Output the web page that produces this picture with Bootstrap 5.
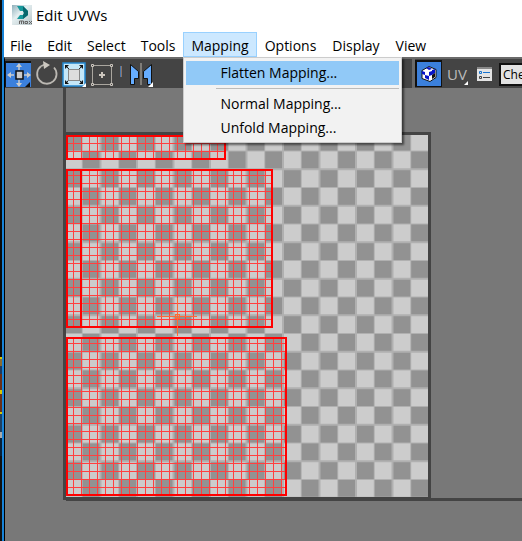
<!DOCTYPE html>
<html lang="en">
<head>
<meta charset="utf-8">
<meta name="viewport" content="width=device-width, initial-scale=1">
<title>Edit UVWs</title>
<link rel="stylesheet" href="https://cdn.jsdelivr.net/npm/bootstrap@5.3.0/dist/css/bootstrap.min.css">
<style>
body{font-family:"Open Sans","Noto Sans",sans-serif;font-size:14px;line-height:20px;color:#000;background:#787878}
.desktop-edge{width:2px;background:linear-gradient(#0b0b0b 0 357px,#d8c800 357px 359px,#8b6a30 359px 366px,#203a5c 366px 374px,#6a3018 374px 390px,#d8c800 390px 394px,#6a3018 394px 412px,#d8c800 412px 414px,#204060 414px 432px,#aaa 432px 438px,#082038 438px 456px,#111 456px)}
.window{border-left:2px solid #1883d7;min-width:0}
.title{height:32px;padding:0 0 3px 8px;gap:4px;font-size:15px}
.menus{height:25px}
.menu-btn{border:1px solid transparent;background:none;padding:2px 7px 0;height:25px;color:#000;line-height:20px}
.menus>.menu-btn:nth-child(-n+3){padding-right:6px}
.menus>.menu-btn:first-child{padding-left:5px}
.menu-btn.show{background:#cce8ff;border-color:#99d1ff}
.drop{position:absolute;top:100%;left:0;width:219px;background:#f2f2f2;border:1px solid #ccc;padding:3px 2px 2px;box-shadow:2px 2px 2px #0008;z-index:5}
.drop button{display:block;width:100%;border:0;background:none;text-align:left;padding:2px 0 2px 34px;height:24px;white-space:nowrap}
.drop button.hot{background:#91c9f7}
.drop hr{margin:3px 0 3px 30px;color:#bbb;opacity:1}
.tools{height:31px;background:#444;border-top:2px solid #6a6a6a;border-left:1px solid #000}
.tool{border:0;padding:0;background:none;width:28px;height:28px}
.tool svg{display:block}
.divider{width:3px;height:29px;background:#6a6a6a}
.checker-select{appearance:none;border:2px solid #111;border-right:0;border-radius:0;background:#e3e3e3;color:#000;width:23px;height:23px;font-size:12px;line-height:16px;padding:0 0 0 2px}
.view{border-left:1px solid #000;background:#787878;min-height:0}
</style>
<script src="https://cdn.jsdelivr.net/npm/bootstrap@5.3.0/dist/js/bootstrap.bundle.min.js"></script>
</head>
<body>
<div class="d-flex vh-100 overflow-hidden">
 <div class="desktop-edge flex-shrink-0"></div>
 <main class="window d-flex flex-column flex-fill">
  <header class="title bg-white d-flex align-items-center flex-shrink-0">
   <svg width="20" height="20" viewBox="0 0 20 20" aria-hidden="true"><defs><linearGradient id="lg" x2="1" y2="1"><stop stop-color="#8fb0bb"/><stop offset=".4" stop-color="#e4eef0"/><stop offset="1" stop-color="#b7c4c8"/></linearGradient></defs><path fill="url(#lg)" d="M0 0h20v20H0z"/><path fill="#17989c" d="M5 1h6l5 5v4l-5 4H5l3-4h3l1-2-1-2H8z"/><path fill="#07666d" d="M11 1l5 5v4l-5 4v-4l1-2-1-2z"/><path stroke="#666" fill="none" d="M7.500 19v-3h4v3M9.500 16v3M13 16.500h2.500v2H13zM17 16l3 3M20 16l-3 3"/></svg>
   <span>Edit UVWs</span>
  </header>
  <nav class="menus bg-white d-flex flex-shrink-0" aria-label="Main menu">
   <button class="menu-btn">File</button><button class="menu-btn">Edit</button><button class="menu-btn">Select</button><button class="menu-btn">Tools</button>
   <div class="position-relative"><button class="menu-btn show" aria-expanded="true">Mapping</button>
    <div class="drop"><button class="hot">Flatten Mapping...</button><hr><button>Normal Mapping...</button><button>Unfold Mapping...</button></div>
   </div>
   <button class="menu-btn">Options</button><button class="menu-btn">Display</button><button class="menu-btn">View</button>
  </nav>
  <div class="tools d-flex justify-content-between flex-shrink-0">
   <div class="d-flex align-items-center">
    <button class="tool" aria-label="Move"><svg width="28" height="28"><path fill="#111" d="M0 1h26v26H0z"/><path fill="#3b80dc" d="M1 3h25v24H1z"/><path stroke="#ccc" stroke-width="1.500" d="M14 5v5M14 19v6M4 15h5M19 15h6"/><path fill="#ccc" d="M11 7l3-4 3 4zM11 23l3 4 3-4zM6 12l-4 3 4 3zM22 12l4 3-4 3z"/><path fill="#ccc" stroke="#111" stroke-width="1.500" d="M11 11h7v8h-7z"/><path fill="#111" d="M25 22v5h-5z"/></svg></button>
    <button class="tool" aria-label="Rotate"><svg width="28" height="28"><path fill="none" stroke="#bbb8b2" stroke-width="1.800" d="M8 6.300A9.700 9.700 0 1 0 21 7.500"/><path stroke="#bbb8b2" stroke-width="1.800" d="M8 6.300l4-2"/><path fill="#ccc8c0" d="M10 1l7 4-6 4z"/></svg></button>
    <button class="tool" aria-label="Scale"><svg width="28" height="28"><path fill="#c5e7f8" stroke="#2488d0" stroke-width="1.500" d="M2 3h22v23H2z"/><path stroke="#111" d="M5 6l16 17M21 6L5 23"/><path fill="#ddd" stroke="#888" d="M7.500 9.500h11v11h-11z"/><path fill="#111" d="M4 5h4L4 9zM22 5h-4l4 4zM4 24v-4l4 4zM22 24v-4l-4 4z"/><path fill="#fff" d="M25 23v4h-4z"/></svg></button>
    <button class="tool" aria-label="Freeform"><svg width="28" height="28"><path fill="none" stroke="#aaa69f" d="M3.500 5.500h19v19h-19z"/><path fill="#444" stroke="#ccc6be" d="M2.500 4.500h2v2h-2zM21.500 4.500h2v2h-2zM2.500 23.500h2v2h-2zM21.500 23.500h2v2h-2z"/><path stroke="#ccc6be" stroke-width="2" d="M13 12v6M10 15h6"/></svg></button>
    <svg width="11" height="28" aria-hidden="true"><path fill="#4879ae" d="M3 6h1v11H3z"/><path fill="#927461" d="M4 6h1v11H4z"/></svg>
    <button class="tool" aria-label="Mirror"><svg width="28" height="28"><path fill="#66adff" stroke="#111" d="M2.500 4.500l8 7v7h-4v6h-4z"/><path fill="#66adff" stroke="#111" d="M23.500 4.500l-8 7v7h4v6h4z"/><path stroke="#bbb6ad" d="M13 3v22"/><path fill="#fff" d="M25 22v5h-5z"/></svg></button>
   </div>
   <div class="d-flex align-items-start">
    <span class="divider"></span>
    <button class="tool" aria-label="Show checker"><svg width="28" height="28"><path fill="#111" d="M0 1h27v27H0z"/><path fill="#3b80dc" d="M2 3h24v24H2z"/><path fill="#fff" stroke="#111" d="M14 7.500l7 3v8l-6 4-8-3v-8z"/><path fill="#0715c8" d="M11 9l3-1 3 2-3 1zM17 11l3-1v4l-3 2zM7 12l3 1v3l-3-1zM10 16l4 1v4l-4-2zM14 13l3-1v4l-3 1z"/><path fill="#111" d="M17 16l3-2v4l-3 2z"/></svg></button>
    <button class="tool" aria-label="UV"><svg width="28" height="28"><text x="4" y="21" font-size="15" fill="#bbb">UV</text><path fill="#fff" d="M25 22v4h-4z"/></svg></button>
    <button class="tool" aria-label="Properties"><svg width="28" height="28"><path fill="#e4e4e4" d="M6 8h15v14H6z"/><path fill="#888" d="M6 8h15v2H6z"/><path stroke="#1874d0" fill="none" d="M8.500 12.500h2v2h-2zM12 13.500h7"/><path stroke="#444" fill="none" d="M8.500 17.500h2v2h-2zM12 18.500h7"/></svg></button>
    <select class="checker-select mt-1" aria-label="Background"><option>Checker</option></select>
   </div>
  </div>
  <div class="view flex-fill overflow-hidden">
   <svg class="d-block" width="100%" height="100%" role="img" aria-label="UV layout" shape-rendering="crispEdges">
    <defs>
     <pattern id="tiles" x="64" y="132.750" width="36.500" height="36.500" patternUnits="userSpaceOnUse">
      <path fill="#b0b0b0" d="M0 0h37v37H0z"/><path fill="#ccc" d="M19 1h17v17H19zM1 19h17v17H1z"/><path fill="#929292" d="M1 1h17v17H1zM19 19h17v17H19z"/>
     </pattern>
     <pattern id="mesh" x="1" y="7" width="8" height="8" patternUnits="userSpaceOnUse"><path fill="#ff4040" d="M0 0h8v1H1v7H0z"/></pattern>
    </defs>
    <g transform="translate(-5 -88)">
     <path fill="#444" d="M63 88h3v44h365v366h1600v3H66v-1h-3z"/>
     <path fill="url(#tiles)" d="M66 135h362v362H66z"/>
     <path fill="url(#mesh)" d="M67 136h158v23H67zM67 170h205v157H67zM67 338h219v157H67z"/>
     <path fill="none" stroke="red" stroke-width="2" d="M67 136h158v23H67zM67 170h205v157H67zM81 170v157M67 338h219v157H67z"/>
     <path fill="none" stroke="#ff6a35" d="M157 316.500h40M177.500 298v38M175.500 314.500h4v4h-4z"/>
    </g>
   </svg>
  </div>
 </main>
</div>
</body>
</html>
